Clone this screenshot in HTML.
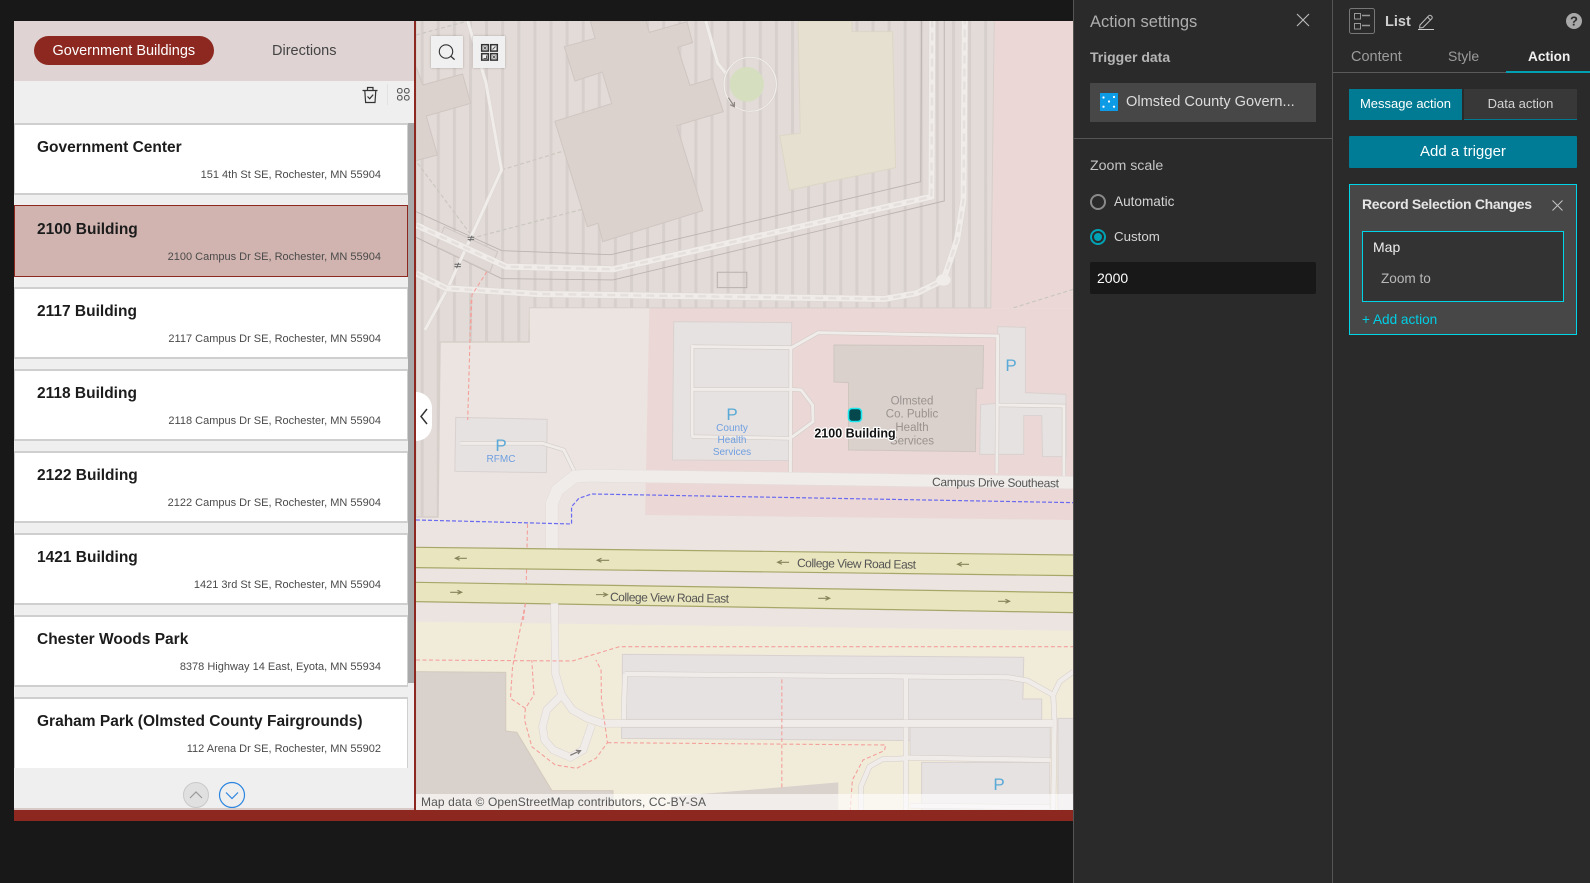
<!DOCTYPE html>
<html><head><meta charset="utf-8"><style>
html,body{margin:0;padding:0;width:1590px;height:883px;overflow:hidden;background:#181818;font-family:"Liberation Sans",sans-serif}
.t{position:absolute;white-space:nowrap;line-height:20px}
.b{position:absolute;box-sizing:border-box}
.item{position:absolute;left:14px;width:394px;height:72px;box-sizing:border-box;background:#fff;border:1px solid #cfcfcf;border-top-width:2px;border-bottom-width:2px}
.item.sel{background:#d1b4b0;border:1px solid #8c281f}
.item.sel .n{top:14px}
.item.sel .a{top:42px}
.item .n{position:absolute;left:22px;top:13px;font-size:15.5px;line-height:20px;font-weight:bold;color:#1c1c1c;white-space:nowrap}
.item .a{position:absolute;right:26px;top:41px;font-size:11px;line-height:18px;color:#4a4a4a;white-space:nowrap}
svg{position:absolute;overflow:visible}
svg.m{overflow:hidden}
.m path,.m polygon,.m polyline,.m rect{vector-effect:non-scaling-stroke}
.m text{font-family:"Liberation Sans",sans-serif}
</style></head><body>

<!-- left panel -->
<div class="b" style="left:14px;top:21px;width:400px;height:60px;background:#dfd3d3"></div>
<div class="b" style="left:34px;top:36px;width:180px;height:29px;border-radius:15px;background:#8c281f"></div>
<div class="t" style="left:52.5px;top:40.5px;font-size:14.5px;color:#fff">Government Buildings</div>
<div class="t" style="left:272px;top:40.5px;font-size:14.5px;color:#444">Directions</div>
<div class="b" style="left:14px;top:81px;width:400px;height:727px;background:#efefef"></div>
<svg style="left:350px;top:80px" width="64" height="40" viewBox="350 80 64 40" fill="none">
<path d="M362.5 90.5H377.5M364.8 90.5L365.6 102.5H375L375.8 90.5M367.5 90.5V87.5H373V90.5M367.5 96.5L369.7 98.7L373.2 94.6" stroke="#333" stroke-width="1.2"/>
<path d="M387.5 84V105" stroke="#e2e2e2"/>
<g stroke="#555" stroke-width="1.1"><rect x="397.5" y="88.5" width="4.6" height="4.6" rx="2"/><rect x="404.5" y="88.5" width="4.6" height="4.6" rx="2"/><rect x="397.5" y="95.5" width="4.6" height="4.6" rx="2"/><rect x="404.5" y="95.5" width="4.6" height="4.6" rx="2"/></g>
</svg>
<div class="b" style="left:408px;top:123px;width:6px;height:560px;background:#a9a9a9"></div>

<div class="item" style="top:123px"><div class="n">Government Center</div><div class="a">151 4th St SE, Rochester, MN 55904</div></div>
<div class="item sel" style="top:205px"><div class="n">2100 Building</div><div class="a">2100 Campus Dr SE, Rochester, MN 55904</div></div>
<div class="item" style="top:287px"><div class="n">2117 Building</div><div class="a">2117 Campus Dr SE, Rochester, MN 55904</div></div>
<div class="item" style="top:369px"><div class="n">2118 Building</div><div class="a">2118 Campus Dr SE, Rochester, MN 55904</div></div>
<div class="item" style="top:451px"><div class="n">2122 Building</div><div class="a">2122 Campus Dr SE, Rochester, MN 55904</div></div>
<div class="item" style="top:533px"><div class="n">1421 Building</div><div class="a">1421 3rd St SE, Rochester, MN 55904</div></div>
<div class="item" style="top:615px"><div class="n">Chester Woods Park</div><div class="a">8378 Highway 14 East, Eyota, MN 55934</div></div>
<div class="item" style="top:697px;height:71px;border-bottom:0"><div class="n">Graham Park (Olmsted County Fairgrounds)</div><div class="a">112 Arena Dr SE, Rochester, MN 55902</div></div>
<div class="b" style="left:14px;top:768px;width:400px;height:40px;background:#efefef"></div>
<svg style="left:170px;top:775px" width="90" height="35" viewBox="170 775 90 35" fill="none">
<circle cx="196" cy="795" r="12.5" fill="#e0e0e0" stroke="#c9c9c9"/>
<path d="M190 798L196 792L202 798" stroke="#999" stroke-width="1.2"/>
<circle cx="232" cy="795" r="12.5" stroke="#2b85e0" stroke-width="1.2"/>
<path d="M226 792.5L232 798.5L238 792.5" stroke="#2b85e0" stroke-width="1.2"/>
</svg>
<div class="b" style="left:14px;top:808px;width:400px;height:2px;background:#d8c8c6"></div>
<div class="b" style="left:14px;top:810px;width:1059px;height:11px;background:#8c281f"></div>
<div class="b" style="left:414px;top:21px;width:2px;height:789px;background:#8c281f"></div>

<!-- map -->
<svg class="m" style="left:416px;top:21px;filter:blur(.35px)" width="657" height="789" viewBox="416 21 657 789" fill="none">
<defs>
<pattern id="st" patternUnits="userSpaceOnUse" x="420.7" y="0" width="16.1" height="20"><rect width="3" height="20" fill="#d6cfcb"/></pattern>
<g id="rd3"><path d="M14 675L225 800L475 808L1220 590L1222 63"/><path d="M14 820L85 865L300 882L1110 897L1185 880L1248 840L1280 720L1295 600L1298 63"/></g>
<g id="th3"><path d="M135 63L178 250L214 510L90 860L35 990"/><path d="M692 63L720 190L740 222"/></g>
<g id="th4"><path d="M660 135V410"/><path d="M660 140L893 143"/><path d="M660 268L893 268L915 270L942 315L943 365L893 412"/><path d="M660 410L893 415"/><path d="M891 143L890 520"/><path d="M893 143L955 98L1375 108L1373 520"/><path d="M1375 315L1530 318L1530 530"/><path d="M118 430H310L360 450L385 515"/></g>
<g id="th5"><path d="M503 222L1400 232L1445 242L1505 285L1508 370L1505 630"/><path d="M503 222L500 358"/><path d="M1552 215L1520 245L1505 285"/><path d="M1160 235V630"/><path d="M1160 475L1105 478L1075 500L1055 560L1055 630"/><path d="M1160 473L1497 480"/><path d="M1170 617L1497 622"/></g>
<g id="lp5"><path d="M338 10L340 220L355 285L380 330L415 355L450 370"/><path d="M355 285L320 330L310 380L315 420L335 450L375 472L405 450L425 375"/></g>
</defs>
<rect x="416" y="21" width="657" height="789" fill="#ebe4e1"/>
<polygon points="416,10 994.7,10 991,308.3 529.7,308 529,342 440,342 438,517 416,517" fill="#e2dbd7"/>
<polygon points="416,10 994.7,10 991,308.3 529.7,308 529,342 440,342 438,517 416,517" fill="url(#st)" stroke="#d6cec9" stroke-width="1.5"/>

<g transform="translate(410,0) scale(.4274,.3333)">
<polygon points="1368,63 1552,63 1552,925 1360,925" fill="#ebd8d6"/>
<polygon points="422,63 433,115 361,140 386,243 450,216 472,311 339,364 415,680 440,670 451,725 685,632 624,377 733,335 708,236 655,256 626,142 661,128 648,65 560,97 552,63" fill="#dbd2ce" stroke="#cfc5c1"/>
<polygon points="14,200 30,255 123,222 142,310 38,348 64,465 14,482" fill="#dbd2ce" stroke="#cfc5c1"/>
<polygon points="908,63 1034,63 1034,95 1129,95 1136,503 888,570 865,407 913,400" fill="#e6e0d0" stroke="#ddd6c6"/>
<path d="M14 635L215 752L470 764L1195 545L1197 63M14 712L215 836L475 840L1250 603L1250 63" stroke="#bcb3b0" stroke-width=".9"/>
<polygon points="80,680 205,755 187,817 62,740" fill="#e0d8d4" stroke="#cfc6c2"/>
<path d="M14 105L135 63M214 510L362 452M143 715L403 628M18 490L140 700M1383 935L1552 868" stroke="#cbc7c0" stroke-width="1.2" stroke-dasharray="4 2.5"/>
<use href="#th3" stroke="#dcd5d1" stroke-width="4"/><use href="#th3" stroke="#f0ecea" stroke-width="3"/>
<use href="#rd3" stroke="#ddd6d2" stroke-width="7"/><use href="#rd3" stroke="#f0ecea" stroke-width="6"/><use href="#rd3" stroke="#e6e0dd" stroke-width="2.5" stroke-dasharray="8 5"/>
<circle cx="1248" cy="840" r="17" fill="#f0ecea"/>
<ellipse cx="788" cy="253" rx="40" ry="52" fill="#d5dfbf"/>
<ellipse cx="796" cy="253" rx="61" ry="81" stroke="#cfc7c3" stroke-width="4.5"/><ellipse cx="796" cy="253" rx="61" ry="81" stroke="#f0ecea" stroke-width="3.3"/>
<path d="M745 293L758 318M749 314L759 320L759 306" stroke="#8e8683" stroke-width="1.2"/>
<rect x="719" y="817" width="69" height="46" stroke="#b8b0ac"/>
<path d="M180 815L145 885L142 990" stroke="#f4a09a" stroke-width="1.1" stroke-dasharray="4 2.5"/>
<path d="M135 712H150M135 719H150M145 707L140 724M104 793H119M104 800H119M114 788L109 805" stroke="#666"/>
<polygon points="280,925 560,925 560,990 280,990" fill="#ebe4e1"/>
</g>

<g transform="translate(410,300) scale(.4274,.3333)">
<polygon points="560,25 1552,25 1552,660 550,645" fill="#ebd8d6"/>
<polygon points="617,65 893,68 888,482 614,480" fill="#e6e2e1" stroke="#d9d1cf"/>
<polygon points="107,352 321,358 319,518 105,514" fill="#e6e2e1" stroke="#d9d1cf"/>
<polygon points="1375,80 1440,82 1440,278 1535,283 1535,470 1480,470 1478,347 1436,347 1436,463 1333,463 1335,314 1375,310" fill="#e6e2e1" stroke="#d9d1cf"/>
<polygon points="992,135 1342,137 1340,265 1325,265 1323,455 1026,450 1026,248 992,246" fill="#dad1cc" stroke="#cfc5c0"/>
<use href="#th4" stroke="#d3cbc7" stroke-width="4.2"/><use href="#th4" stroke="#f0ecea" stroke-width="3"/>
<path d="M332 750V610L345 570L385 530L420 527L1552 548" stroke="#e3dcd9" stroke-width="13"/>
<path d="M332 750V610L345 570L385 530L420 527L1552 548" stroke="#f0ecea" stroke-width="12"/>
<path d="M14 660L378 672V620L395 595L425 582L1552 608" stroke="#6a6af0" stroke-width="1.2" stroke-dasharray="4 2"/>
<path d="M143 0L135 360M275 672L272 850M270 910L265 960" stroke="#f4a09a" stroke-width="1.1" stroke-dasharray="4 2.5"/>
<polygon points="14,742 1552,765 1552,827 14,803" fill="#e9e5be"/>
<path d="M14 742L1552 765M14 803L1552 827" stroke="#a8a76a" stroke-width="1.2"/>
<polygon points="14,847 1552,878 1552,938 14,905" fill="#e9e5be"/>
<path d="M14 847L1552 878M14 905L1552 938" stroke="#a8a76a" stroke-width="1.2"/>
<path d="M106 775H133M116 769L106 775L116 781M438 781H466M448 775L438 781L448 787M860 787H887M870 781L860 787L870 793M1281 793H1308M1291 787L1281 793L1291 799" stroke="#86845a" stroke-width="1.1"/>
<path d="M94 877H121M111 871L121 877L111 883M435 884H462M452 878L462 884L452 890M955 895H982M972 889L982 895L972 901M1376 904H1403M1393 898L1403 904L1393 910" stroke="#86845a" stroke-width="1.1"/>
</g>

<g transform="translate(410,600) scale(.4274,.3333)">
<polygon points="14,65 1552,92 1552,630 14,630" fill="#f1ebda"/>
<polygon points="14,215 224,217 224,393 250,397 332,572 475,572 475,630 14,630" fill="#d9d1cc" stroke="#d3cabd"/>
<polygon points="610,590 1002,547 1002,630 610,630" fill="#d9d1cc"/>
<polygon points="497,163 1436,172 1434,297 1478,297 1478,358 497,358" fill="#e6e2e1" stroke="#d9d1cf"/>
<polygon points="495,382 1199,382 1199,422 495,415" fill="#e6e2e1" stroke="#d9d1cf"/>
<polygon points="1170,382 1498,382 1498,475 1170,470" fill="#e6e2e1" stroke="#d9d1cf"/>
<polygon points="1197,487 1497,487 1497,630 1197,630" fill="#e6e2e1" stroke="#d9d1cf"/>
<polygon points="1516,355 1552,355 1552,630 1516,630" fill="#e6e2e1" stroke="#d9d1cf"/>
<use href="#th5" stroke="#d3cbc7" stroke-width="5.5"/><use href="#th5" stroke="#f0ecea" stroke-width="4.5"/>
<use href="#lp5" stroke="#d9d2ce" stroke-width="8"/><use href="#lp5" stroke="#f0ecea" stroke-width="7"/>
<path d="M448 370H1505" stroke="#d9d2ce" stroke-width="8"/><path d="M448 370H1505" stroke="#f0ecea" stroke-width="7"/>
<path d="M14 180L380 183L490 140L1552 140M270 10L240 200L235 295L270 325L290 285L285 180M270 325L268 360L285 440L340 495L390 505L435 475L462 428L448 300L447 210L435 180M462 428L1113 435L1110 452L1060 480L1035 540L1030 630M870 238V565" stroke="#f4a09a" stroke-width="1.1" stroke-dasharray="4 2.5"/>
<path d="M375 466L398 452M388 451L399 452L393 462" stroke="#7d7674" stroke-width="1.2"/>
</g>

<g text-anchor="middle" font-size="11.5" fill="#9a928e">
<text x="912" y="404.5">Olmsted</text><text x="912" y="417.5">Co. Public</text><text x="912" y="431">Health</text><text x="912" y="444.5">Services</text>
</g>
<rect x="848.5" y="408.5" width="13" height="13" rx="3.5" fill="#04484d" stroke="#1ee8ee" stroke-width="1.6"/>
<text x="855" y="437.5" text-anchor="middle" font-size="12.5" font-weight="bold" fill="#111" stroke="#fff" stroke-width="2.4" paint-order="stroke" stroke-linejoin="round">2100 Building</text>
<g text-anchor="middle" fill="#5aa9d6" font-size="17">
<text x="501" y="451">P</text><text x="732" y="420">P</text><text x="1011" y="371">P</text><text x="999" y="790">P</text>
</g>
<g text-anchor="middle" fill="#6f9fe0" font-size="10">
<text x="501" y="462">RFMC</text><text x="732" y="431">County</text><text x="732" y="443">Health</text><text x="732" y="455">Services</text>
</g>
<text x="932" y="486" font-size="12" fill="#555" textLength="127" transform="rotate(.6 932 486)">Campus Drive Southeast</text>
<text x="797" y="567" font-size="12" fill="#555" textLength="119" transform="rotate(.8 797 567)">College View Road East</text>
<text x="610" y="601" font-size="12" fill="#555" textLength="119" transform="rotate(.8 610 601)">College View Road East</text>
<rect x="416" y="794" width="657" height="16" fill="#fff" fill-opacity=".6"/>
<text x="421" y="806" font-size="12" fill="#555" textLength="285">Map data © OpenStreetMap contributors, CC-BY-SA</text>
</svg>

<!-- map controls -->
<div class="b" style="left:431px;top:36px;width:32px;height:32px;background:#f0f0f0;box-shadow:0 0 2px rgba(0,0,0,.25)"></div>
<div class="b" style="left:473px;top:36px;width:32px;height:32px;background:#f0f0f0;box-shadow:0 0 2px rgba(0,0,0,.25)"></div>
<svg style="left:431px;top:36px" width="74" height="32" viewBox="431 36 74 32" fill="none">
<circle cx="446" cy="51.5" r="6.7" stroke="#333" stroke-width="1.1"/><path d="M450.8 56.3L454.6 59.6" stroke="#333" stroke-width="1.3"/>
<g stroke="#333" stroke-width="1.5"><rect x="481.7" y="44.7" width="6.6" height="6.4"/><rect x="490.7" y="44.7" width="6.6" height="6.4"/><rect x="481.7" y="53.7" width="6.6" height="6.4"/><rect x="490.7" y="53.7" width="6.6" height="6.4"/></g>
<path d="M483.5 46.5L486.5 49.5M486.5 46.5L483.5 49.5M495.5 46.5L492.5 49.5M483.5 58.5H486.5V55.5M492.5 55.5L495.5 58.5M495.5 55.5L492.5 58.5" stroke="#555"/>
</svg>
<div class="b" style="left:416px;top:392px;width:16px;height:49px;background:#fff;border-radius:0 16px 16px 0"></div>
<svg style="left:416px;top:392px" width="16" height="49" viewBox="0 0 16 49" fill="none"><path d="M11 17L5 24.5L11 32" stroke="#333" stroke-width="1.5"/></svg>

<!-- settings panel -->
<div class="b" style="left:1073px;top:0;width:260px;height:883px;background:#2a2a2a;border-left:1px solid #555"></div>
<div class="t" style="left:1090px;top:12px;font-size:16.5px;color:#aeaeae">Action settings</div>
<svg style="left:1296px;top:13px" width="14" height="14" viewBox="0 0 14 14"><path d="M1 1L13 13M13 1L1 13" stroke="#bdbdbd" stroke-width="1.1"/></svg>
<div class="t" style="left:1090px;top:46.5px;font-size:14px;color:#c4c4c4;font-weight:bold;opacity:.9">Trigger data</div>
<div class="b" style="left:1090px;top:83px;width:226px;height:39px;background:#474747"></div>
<svg style="left:1100px;top:93px" width="18" height="18" viewBox="0 0 18 18"><rect width="18" height="18" fill="#0e9be6"/><g fill="#fff"><circle cx="3.5" cy="4.5" r="1.1"/><circle cx="14" cy="4" r="1.1"/><circle cx="9" cy="8.5" r="1.1"/><circle cx="3.5" cy="13.7" r="1.1"/><circle cx="14" cy="13.7" r="1.1"/></g></svg>
<div class="t" style="left:1126px;top:92px;font-size:14.6px;color:#dcdcdc">Olmsted County Govern...</div>
<div class="b" style="left:1074px;top:138px;width:258px;height:1px;background:#555"></div>
<div class="t" style="left:1090px;top:156px;font-size:14.2px;color:#c4c4c4">Zoom scale</div>
<div class="b" style="left:1090px;top:194px;width:16px;height:16px;border-radius:50%;border:2px solid #8a8a8a"></div>
<div class="t" style="left:1114px;top:192px;font-size:13.6px;color:#d4d4d4">Automatic</div>
<div class="b" style="left:1090px;top:229px;width:16px;height:16px;border-radius:50%;border:2px solid #00a3b5"></div>
<div class="b" style="left:1094px;top:233px;width:8px;height:8px;border-radius:50%;background:#00a3b5"></div>
<div class="t" style="left:1114px;top:227px;font-size:13.3px;color:#d4d4d4">Custom</div>
<div class="b" style="left:1090px;top:262px;width:226px;height:32px;background:#181818;border-radius:2px"></div>
<div class="t" style="left:1097px;top:268px;font-size:14px;color:#fff">2000</div>

<!-- right panel -->
<div class="b" style="left:1332px;top:0;width:258px;height:883px;background:#2a2a2a;border-left:1px solid #555"></div>
<svg style="left:1349px;top:8px" width="27" height="27" viewBox="0 0 27 27" fill="none"><rect x=".5" y=".5" width="25" height="25" rx="2" stroke="#777"/><rect x="5.5" y="5.5" width="6" height="5.5" stroke="#999"/><rect x="5.5" y="15.5" width="6" height="5.5" stroke="#999"/><path d="M13 7.5H21M13 17.5H21" stroke="#999" stroke-width="1.5"/></svg>
<div class="t" style="left:1385px;top:11.5px;font-size:14.5px;font-weight:bold;color:#cfcfcf">List</div>
<svg style="left:1418px;top:13px" width="17" height="18" viewBox="0 0 17 18" fill="none"><path d="M2 12L10.5 3C11.5 2 12.5 2 13.5 3C14.5 4 14.5 5 13.5 6L5 14.5L1.5 15Z M9.5 4L12.5 7" stroke="#bbb"/><path d="M0 16.5H16" stroke="#ccc"/></svg>
<svg style="left:1566px;top:13px" width="16" height="16" viewBox="0 0 16 16"><circle cx="8" cy="8" r="8" fill="#a8a8a8"/><text x="8" y="12.5" text-anchor="middle" font-size="13" font-weight="bold" fill="#2a2a2a" font-family="Liberation Sans,sans-serif">?</text></svg>
<div class="t" style="left:1351px;top:46.5px;font-size:14.5px;color:#9c9c9c">Content</div>
<div class="t" style="left:1448px;top:46px;font-size:14px;color:#9c9c9c">Style</div>
<div class="t" style="left:1528px;top:46.5px;font-size:13.6px;font-weight:bold;color:#f0f0f0">Action</div>
<div class="b" style="left:1333px;top:72px;width:257px;height:1px;background:#5a5a5a"></div>
<div class="b" style="left:1506px;top:71px;width:84px;height:2px;background:#00a0b4"></div>
<div class="b" style="left:1349px;top:89px;width:113px;height:31px;background:#007b93"></div>
<div class="t" style="left:1349px;width:113px;text-align:center;top:94px;font-size:13px;color:#fff">Message action</div>
<div class="b" style="left:1464px;top:89px;width:113px;height:31px;background:#383838;border-bottom:1px solid #007b93"></div>
<div class="t" style="left:1464px;width:113px;text-align:center;top:94px;font-size:13px;color:#d4d4d4">Data action</div>
<div class="b" style="left:1349px;top:136px;width:228px;height:32px;background:#007c96;border-radius:1px"></div>
<div class="t" style="left:1349px;width:228px;text-align:center;top:142px;font-size:15px;color:#fff">Add a trigger</div>
<div class="b" style="left:1349px;top:184px;width:228px;height:151px;background:#474747;border:1px solid #00d5e8"></div>
<div class="t" style="left:1362px;top:194px;font-size:14px;font-weight:bold;color:#e6e6e6;letter-spacing:-.32px">Record Selection Changes</div>
<svg style="left:1552px;top:200px" width="11" height="11" viewBox="0 0 11 11"><path d="M.5 .5L10.5 10.5M10.5 .5L.5 10.5" stroke="#c4c4c4"/></svg>
<div class="b" style="left:1362px;top:231px;width:202px;height:71px;background:#333;border:1px solid #00d5e8"></div>
<div class="t" style="left:1373px;top:237px;font-size:14px;color:#eee">Map</div>
<div class="t" style="left:1381px;top:269px;font-size:13.6px;color:#b8b8b8">Zoom to</div>
<div class="t" style="left:1362px;top:310px;font-size:13.6px;color:#00cfe6">+ Add action</div>
</body></html>
